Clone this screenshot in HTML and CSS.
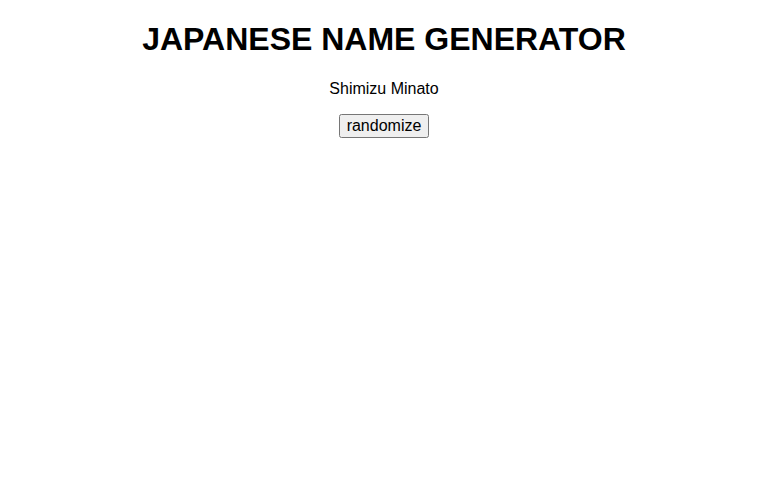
FILE: index.html
```html
<!DOCTYPE html>
<html>
<head>
<meta charset="utf-8">
<link rel="stylesheet" href="styles.css">
</head>
<body>
<div class="app">
  <h1 class="title">JAPANESE NAME GENERATOR</h1>
  <p class="name">Shimizu Minato</p>
  <button class="randomize">randomize</button>
</div>
</body>
</html>
```
FILE: styles.css
```css
body {
  margin: 8px;
  font-family: "Liberation Sans", Arial, sans-serif;
  background: #fff;
  color: #000;
}
.app {
  text-align: center;
}
.title {
  font-size: 32px;
  font-weight: bold;
  margin: 13px 0 22px;
}
.name {
  font-size: 16px;
  margin: 0 0 16px;
  line-height: 18px;
}
.randomize {
  font-family: "Liberation Sans", Arial, sans-serif;
  font-size: 16px;
}
```
